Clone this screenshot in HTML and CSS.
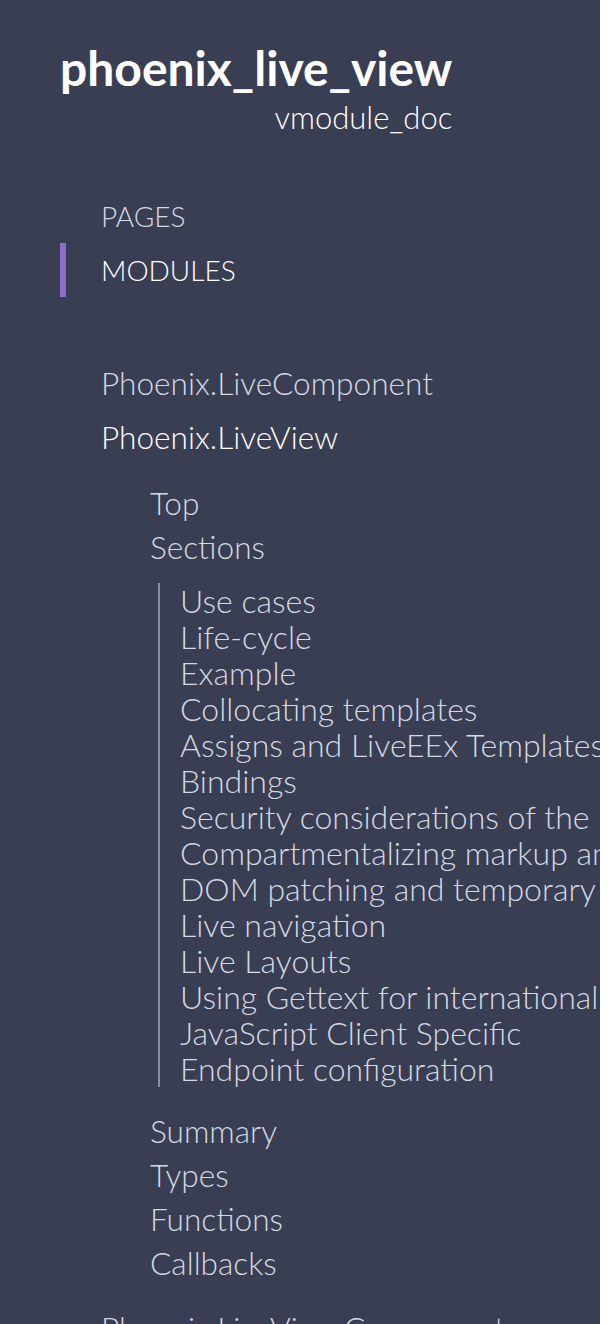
FILE: index.html
```html
<!DOCTYPE html>
<html lang="en">
  <head>
    <meta charset="UTF-8" />
    <meta name="viewport" content="width=device-width, initial-scale=1.0" />
    <title>phoenix_live_view</title>
    <link rel="stylesheet" href="styles.css">
  </head>
  <body>
    <nav class="sidebar">
      <div class="sidebar-header">
        <a class="project-name" href="#">phoenix_live_view</a>
        <span class="project-version">vmodule_doc</span>
      </div>

      <ul class="sidebar-tabs">
        <li><a href="#">PAGES</a></li>
        <li class="active"><a href="#">MODULES</a></li>
      </ul>

      <ul class="module-list">
        <li><a href="#">Phoenix.LiveComponent</a></li>
        <li class="current">
          <a href="#">Phoenix.LiveView</a>
          <ul class="module-toc">
            <li><a href="#">Top</a></li>
            <li>
              <a href="#">Sections</a>
              <ul class="section-list">
                <li><a href="#">Use cases</a></li>
                <li><a href="#">Life-cycle</a></li>
                <li><a href="#">Example</a></li>
                <li><a href="#">Collocating templates</a></li>
                <li><a href="#">Assigns and LiveEEx Templates</a></li>
                <li><a href="#">Bindings</a></li>
                <li><a href="#">Security considerations of the LiveView model</a></li>
                <li><a href="#">Compartmentalizing markup and events with render, live_render, and live_component</a></li>
                <li><a href="#">DOM patching and temporary assigns</a></li>
                <li><a href="#">Live navigation</a></li>
                <li><a href="#">Live Layouts</a></li>
                <li><a href="#">Using Gettext for internationalization</a></li>
                <li><a href="#">JavaScript Client Specific</a></li>
                <li><a href="#">Endpoint configuration</a></li>
              </ul>
            </li>
            <li><a href="#">Summary</a></li>
            <li><a href="#">Types</a></li>
            <li><a href="#">Functions</a></li>
            <li><a href="#">Callbacks</a></li>
          </ul>
        </li>
        <li><a href="#">Phoenix.LiveView.Component</a></li>
        <li><a href="#">Phoenix.LiveView.Controller</a></li>
      </ul>
    </nav>
  </body>
</html>
```

FILE: styles.css
```css
body {
  margin: 0;
  background: #ffffff;
  font-family: Lato, "Open Sans", sans-serif;
}
a {
  color: inherit;
  text-decoration: none;
}
ul {
  list-style: none;
  margin: 0;
  padding: 0;
}
.sidebar {
  width: 600px;
  height: 1324px;
  overflow: hidden;
  background-color: #393e52;
  color: #d5d9e3;
  font-weight: 300;
  white-space: nowrap;
}
.sidebar-header {
  display: inline-flex;
  flex-direction: column;
  align-items: flex-end;
  margin: 40px 0 0 60px;
}
.project-name {
  color: #ffffff;
  font-weight: 700;
  font-size: 48px;
  line-height: 56px;
}
.project-version {
  margin-top: 3px;
  color: #ffffff;
  font-size: 31px;
  line-height: 36px;
}
.sidebar-tabs {
  margin: 54px 0 0 60px;
}
.sidebar-tabs li {
  border-left: 6px solid transparent;
  padding-left: 35px;
  font-size: 28px;
  line-height: 54px;
}
.sidebar-tabs li.active {
  border-left-color: #8d6bc9;
  color: #ffffff;
}
.module-list {
  margin-top: 59px;
  padding-left: 101px;
}
.module-list > li > a {
  display: block;
  font-size: 31.6px;
  line-height: 54px;
}
.module-list > li.current > a {
  color: #ffffff;
}
.module-toc {
  margin: 17px 0 16px 49px;
}
.module-toc > li > a {
  display: block;
  font-size: 31.6px;
  line-height: 44px;
}
.section-list {
  margin: 14px 0 22px 8px;
  border-left: 2px solid #8a8d96;
  padding-left: 20px;
}
.section-list li {
  font-size: 32px;
  line-height: 36px;
}
```
